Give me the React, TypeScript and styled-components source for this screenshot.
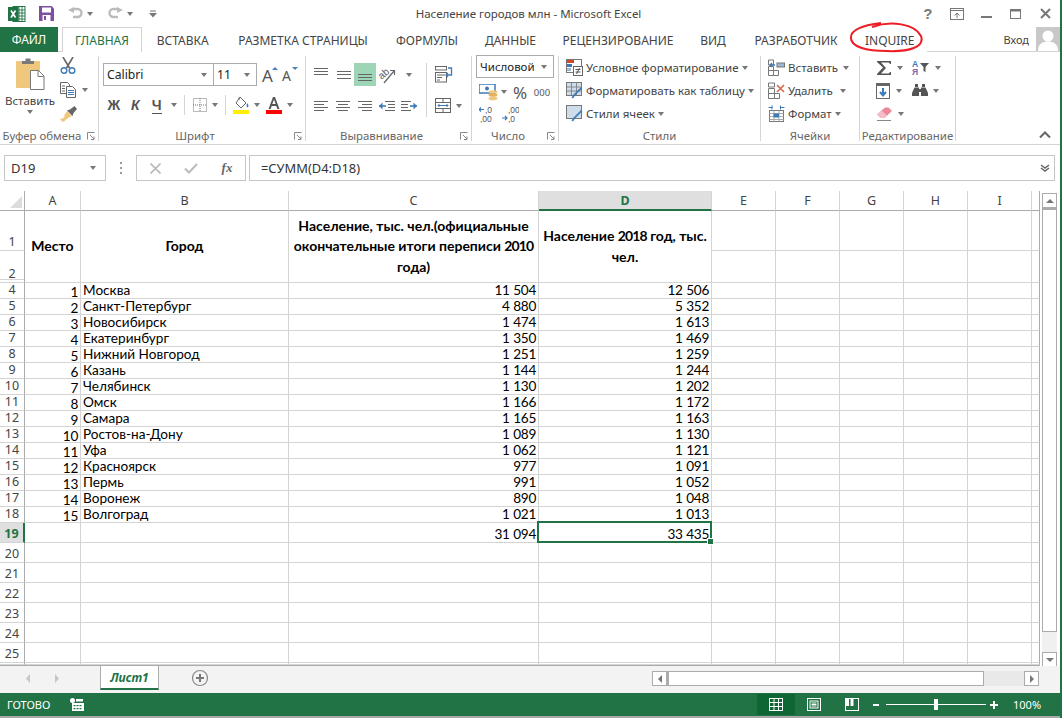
import styled, { createGlobalStyle } from "styled-components";
import { Fragment, type ReactNode } from "react";

const UI = `"Noto Sans", "Open Sans", sans-serif`;
const SHEET = `Lato, "Open Sans", sans-serif`;
const GREEN = "#217346";
const LINE = "#d4d4d4";

const Global = createGlobalStyle`
  html, body { margin: 0; padding: 0; background: #fff; }
  #root { width: 1062px; height: 718px; overflow: hidden; }
`;

const Window = styled.div`
  width: 1062px;
  height: 718px;
  box-sizing: border-box;
  border-right: 2px solid ${GREEN};
  display: flex;
  flex-direction: column;
  font-family: ${UI};
  font-size: 12px;
  color: #444;
  background: #fff;
  overflow: hidden;
`;

/* title bar */
const TitleBar = styled.div`
  height: 27px;
  flex: none;
  display: grid;
  grid-template-columns: 1fr auto 1fr;
  align-items: center;
`;
const Qat = styled.div`
  display: flex;
  align-items: center;
  padding-left: 8px;
`;
const QatSlot = styled.div<{ $w: number }>`
  width: ${(p) => p.$w}px;
  display: flex;
  align-items: center;
`;
const Title = styled.div`
  font-size: 11.5px;
  color: #444;
  padding-right: 3px;
`;
const Controls = styled.div`
  justify-self: end;
  display: flex;
`;
const Control = styled.div`
  width: 29.4px;
  height: 27px;
  display: flex;
  align-items: center;
  justify-content: center;
  font: bold 15px "Liberation Sans", sans-serif;
  color: #777;
`;

/* tabs */
const TabBar = styled.div`
  position: relative;
  height: 25px;
  flex: none;
  box-sizing: border-box;
  border-bottom: 1px solid ${LINE};
  display: flex;
`;
const FileTab = styled.div`
  width: 58px;
  height: 25px;
  margin-right: 4px;
  background: ${GREEN};
  color: #fff;
  display: flex;
  align-items: center;
  justify-content: center;
`;
const Tab = styled.div<{ $w: number; $active?: boolean }>`
  width: ${(p) => p.$w}px;
  height: 25px;
  box-sizing: border-box;
  display: flex;
  align-items: center;
  justify-content: center;
  white-space: nowrap;
  color: ${(p) => (p.$active ? GREEN : "#444")};
  background: #fff;
  border: 1px solid ${(p) => (p.$active ? LINE : "transparent")};
  border-bottom: ${(p) => (p.$active ? "none" : "0")};
`;
const UserArea = styled.div`
  margin-left: auto;
  display: flex;
  align-items: center;
  gap: 7px;
  height: 24px;
  font-size: 11px;
`;
const Avatar = styled.div`
  width: 24px;
  height: 24px;
  background: #c8c8c8;
  display: flex;
  overflow: hidden;
`;
const Circled = styled.svg`
  position: absolute;
  left: 849px;
  top: -6px;
  width: 76px;
  height: 34px;
  pointer-events: none;
`;

/* ribbon */
const Ribbon = styled.div`
  height: 93px;
  flex: none;
  box-sizing: border-box;
  border-bottom: 1px solid ${LINE};
  padding-top: 4px;
  display: flex;
  font-size: 11.5px;
`;
const Group = styled.div<{ $w: number }>`
  width: ${(p) => p.$w}px;
  height: 85px;
  flex: none;
  box-sizing: border-box;
  border-right: 1px solid ${LINE};
  display: flex;
  flex-direction: column;
`;
const GroupBody = styled.div`
  height: 72px;
  display: flex;
  flex: none;
`;
const GroupFoot = styled.div`
  height: 13px;
  padding-top: 1px;
  display: flex;
  align-items: center;
  color: #666;
  font-size: 11.4px;
`;
const FootLabel = styled.div`
  flex: 1;
  text-align: center;
  white-space: nowrap;
`;
const Launcher = styled.svg`
  width: 14px;
  height: 10px;
  flex: none;
`;
const Caret = styled.span<{ $ml?: number }>`
  display: inline-block;
  flex: none;
  width: 0;
  height: 0;
  margin-left: ${(p) => p.$ml ?? 0}px;
  border-left: 3.5px solid transparent;
  border-right: 3.5px solid transparent;
  border-top: 4px solid #777;
`;
const Spacer = styled.span<{ $w: number }>`
  flex: none;
  width: ${(p) => p.$w}px;
`;
const PasteCol = styled.div`
  width: 58px;
  display: flex;
  flex-direction: column;
  align-items: center;
  padding-left: 2px;
  box-sizing: border-box;
`;
const PasteLabel = styled.div`
  margin-top: 2px;
  line-height: 18px;
  color: #444;
`;
const ClipTools = styled.div`
  display: flex;
  flex-direction: column;
  padding-left: 2px;
  gap: 5px;
`;
const ClipRow = styled.div`
  display: flex;
  align-items: center;
  height: 19px;
`;
const FontBody = styled.div`
  display: flex;
  flex-direction: column;
  padding: 7px 0 0 4px;
  gap: 9px;
`;
const FontRow = styled.div`
  display: flex;
  align-items: center;
`;
const FontSelect = styled.div<{ $w: number }>`
  width: ${(p) => p.$w}px;
  height: 23px;
  box-sizing: border-box;
  border: 1px solid #ababab;
  margin-right: -1px;
  padding: 0 6px 0 3px;
  display: flex;
  align-items: center;
  justify-content: space-between;
  background: #fff;
  font-size: 12.2px;
  color: #222;
`;
const SizeButton = styled.div<{ $up?: boolean }>`
  width: 18px;
  margin-left: ${(p) => (p.$up ? 6 : 2)}px;
  height: 22px;
  position: relative;
  display: flex;
  align-items: flex-end;
  justify-content: flex-start;
  font: ${(p) => (p.$up ? 17 : 14)}px ${UI};
  line-height: 20px;
  color: #555;
`;
const SizeMark = styled.span<{ $down?: boolean }>`
  position: absolute;
  top: 3px;
  right: 2px;
  width: 0;
  height: 0;
  border-left: 3px solid transparent;
  border-right: 3px solid transparent;
  ${(p) =>
    p.$down
      ? "border-top: 3px solid #4a7ebb;"
      : "border-bottom: 3px solid #4a7ebb;"}
`;
const FormatKey = styled.div<{ $italic?: boolean; $under?: boolean }>`
  width: 21.5px;
  text-align: center;
  font: bold 14px "Liberation Sans", sans-serif;
  font-style: ${(p) => (p.$italic ? "italic" : "normal")};
  color: #555;
  span {
    border-bottom: ${(p) => (p.$under ? "1.5px solid #555" : "none")};
  }
`;
const VSep = styled.div<{ $ml: number; $mr: number }>`
  width: 1px;
  height: 20px;
  margin: 0 ${(p) => p.$mr}px 0 ${(p) => p.$ml}px;
  background: ${LINE};
  flex: none;
`;
const AlignBody = styled.div`
  display: grid;
  grid-template-columns: repeat(5, 22px) 11px 1fr;
  grid-template-rows: 23px 23px;
  row-gap: 8px;
  padding: 7px 0 0 4px;
`;
const AlignCell = styled.div<{ $on?: boolean; $start?: boolean }>`
  display: flex;
  align-items: center;
  justify-content: ${(p) => (p.$start ? "flex-start" : "center")};
  padding-left: ${(p) => (p.$start ? 4 : 0)}px;
  background: ${(p) => (p.$on ? "#9fd5b7" : "transparent")};
`;
const AlignDivider = styled.div`
  grid-column: 6;
  grid-row: 1 / span 2;
  width: 1px;
  height: 54px;
  background: ${LINE};
  margin-left: 6px;
`;
const NumberBody = styled.div`
  display: flex;
  flex-direction: column;
  padding-left: 4px;
  margin-top: -1px;
`;
const NumberSelect = styled(FontSelect)`
  margin: 0 0 3px;
  font-size: 11.5px;
`;
const NumberRow = styled.div`
  height: 22px;
  display: flex;
  align-items: center;
`;
const PercentKey = styled.div<{ $w: number; $size: number }>`
  width: ${(p) => p.$w}px;
  text-align: center;
  font-size: ${(p) => p.$size}px;
  color: #555;
`;
const Stack = styled.div<{ $pl: number }>`
  display: flex;
  flex-direction: column;
  padding-left: ${(p) => p.$pl}px;
`;
const StackRow = styled.div`
  height: 23px;
  display: flex;
  align-items: center;
  white-space: nowrap;
  gap: 3px;
`;
const StackText = styled.span<{ $w?: number }>`
  min-width: ${(p) => p.$w ?? 0}px;
`;
const EditGrid = styled.div`
  display: grid;
  grid-template-columns: 36px 36px;
  grid-auto-rows: 23px;
  padding-left: 16px;
`;
const EditCell = styled.div`
  display: flex;
  align-items: center;
  gap: 5px;
`;
const CollapseArea = styled.div`
  flex: 1;
  display: flex;
  align-items: flex-end;
  justify-content: flex-end;
  padding: 0 9px 5px 0;
`;

/* formula bar */
const FormulaRow = styled.div`
  height: 26px;
  flex: none;
  margin: 10px 0;
  padding-left: 4px;
  display: flex;
  align-items: stretch;
`;
const NameBox = styled.div`
  width: 102px;
  box-sizing: border-box;
  border: 1px solid #c6c6c6;
  display: flex;
  align-items: center;
  justify-content: space-between;
  padding: 0 9px 0 6px;
  font-size: 13px;
  color: #333;
`;
const Dots = styled.div`
  width: 30px;
  display: flex;
  flex-direction: column;
  align-items: center;
  justify-content: center;
  gap: 3px;
  i {
    width: 2px;
    height: 2px;
    background: #999;
  }
`;
const FxBox = styled.div`
  width: 110px;
  box-sizing: border-box;
  border: 1px solid #c6c6c6;
  margin-right: 3px;
  display: grid;
  grid-template-columns: 1fr 1fr 1fr;
  align-items: center;
  justify-items: center;
`;
const FxMark = styled.span`
  font: italic bold 13px "Liberation Serif", serif;
  color: #666;
`;
const FormulaInput = styled.div`
  width: 806px;
  box-sizing: border-box;
  border: 1px solid #c6c6c6;
  display: flex;
  align-items: center;
  justify-content: space-between;
  padding: 0 4px 0 11px;
  font-size: 12.9px;
  color: #333;
`;

/* sheet */
const SheetArea = styled.div`
  height: 475px;
  flex: none;
  display: flex;
`;
const Sheet = styled.div`
  width: 1040px;
  box-sizing: border-box;
  height: 475px;
  border-bottom: 1px solid #ababab;
  display: grid;
  grid-template-columns: 25px 56px 208px 250px 173px 64px 64px 64px 64px 64px 8px;
  grid-template-rows: 20px 40px 32px repeat(15, 16px) repeat(7, 20px) 2px;
  overflow: hidden;
`;
const Corner = styled.div`
  box-sizing: border-box;
  border-right: 1px solid #ababab;
  border-bottom: 1px solid #ababab;
  display: flex;
  align-items: flex-end;
  justify-content: flex-end;
  padding: 0 2px 2px 0;
`;
const ColHead = styled.div<{ $on?: boolean; $last?: boolean }>`
  box-sizing: border-box;
  display: flex;
  align-items: center;
  justify-content: center;
  font-size: 12.5px;
  font-weight: ${(p) => (p.$on ? 700 : 400)};
  color: ${(p) => (p.$on ? GREEN : "#444")};
  background: ${(p) => (p.$on ? "#dfdfdf" : "#fff")};
  border-right: 1px solid ${(p) => (p.$last ? "#ababab" : LINE)};
  border-bottom: ${(p) => (p.$on ? `2px solid ${GREEN}` : "1px solid #ababab")};
`;
const RowHead = styled.div<{ $on?: boolean; $hidden?: boolean }>`
  box-sizing: border-box;
  display: flex;
  align-items: flex-end;
  justify-content: center;
  line-height: 16px;
  font-size: 12.5px;
  font-weight: ${(p) => (p.$on ? 700 : 400)};
  color: ${(p) => (p.$on ? GREEN : "#444")};
  background: ${(p) => (p.$on ? "#dfdfdf" : "#fff")};
  border-right: ${(p) => (p.$on ? `2px solid ${GREEN}` : "1px solid #ababab")};
  border-bottom: 1px solid ${LINE};
  box-shadow: ${(p) =>
    p.$hidden ? `inset 0 -2px 0 #fff, inset 0 -3px 0 ${LINE}` : "none"};
`;
const Cell = styled.div<{
  $num?: boolean;
  $span?: number;
  $raised?: boolean;
  $last?: boolean;
  $sel?: boolean;
}>`
  position: relative;
  box-sizing: border-box;
  min-width: 0;
  grid-row: span ${(p) => p.$span ?? 1};
  display: flex;
  align-items: flex-end;
  justify-content: ${(p) => (p.$num ? "flex-end" : "flex-start")};
  padding: 0 2px ${(p) => (p.$raised ? 2 : 0)}px 2px;
  border-right: 1px solid ${(p) => (p.$last ? "#ababab" : LINE)};
  border-bottom: 1px solid ${LINE};
  font: 13.6px/12px ${SHEET};
  letter-spacing: ${(p) => (p.$num ? "-0.3px" : "0")};
  word-spacing: ${(p) => (p.$num ? "0.5px" : "0")};
  color: #000;
  white-space: nowrap;
  ${(p) =>
    p.$sel
      ? `&::after {
          content: "";
          position: absolute;
          inset: -2px -1px -1px -2px;
          border: 2px solid ${GREEN};
        }`
      : ""}
`;
const HeadCell = styled(Cell)`
  align-items: center;
  justify-content: center;
  text-align: center;
  font-size: 14px;
  font-weight: 700;
  line-height: 20.5px;
`;
const Digits = styled.span`
  letter-spacing: -0.9px;
`;
const Handle = styled.span`
  position: absolute;
  right: -3px;
  bottom: -3px;
  width: 5px;
  height: 5px;
  background: ${GREEN};
  border: 1px solid #fff;
  z-index: 1;
`;
const VScroll = styled.div`
  width: 20px;
  box-sizing: border-box;
  padding: 2px 3px 0 2px;
  display: flex;
  flex-direction: column;
`;
const ScrollBtn = styled.div<{ $flip?: boolean }>`
  height: 15px;
  flex: none;
  box-sizing: border-box;
  border: 1px solid #ababab;
  display: flex;
  align-items: center;
  justify-content: center;
  &::before {
    content: "";
    width: 0;
    height: 0;
    border-left: 4px solid transparent;
    border-right: 4px solid transparent;
    ${(p) =>
      p.$flip
        ? "border-top: 4px solid #777;"
        : "border-bottom: 4px solid #777;"}
  }
`;
const VTrack = styled.div`
  flex: none;
  height: 444px;
  background: #f0f0f0;
`;
const VThumb = styled.div`
  height: 424px;
  box-sizing: border-box;
  background: #fff;
  border: 1px solid #ababab;
  border-top-width: 2px;
`;

/* tab strip */
const SheetBar = styled.div`
  height: 27px;
  flex: none;
  background: #f3f3f3;
  display: flex;
  align-items: flex-start;
`;
const NavArrows = styled.div`
  width: 100px;
  height: 24px;
  box-sizing: border-box;
  padding-left: 25px;
  display: flex;
  gap: 23px;
  align-items: center;
`;
const SheetTab = styled.div`
  width: 59px;
  height: 25px;
  margin-top: -1px;
  box-sizing: border-box;
  background: #fff;
  border: 1px solid #ababab;
  border-bottom: 2px solid ${GREEN};
  display: flex;
  align-items: center;
  justify-content: center;
  font: italic 700 12px ${UI};
  color: ${GREEN};
`;
const AddSheet = styled.svg`
  width: 18px;
  height: 18px;
  margin: 3px 0 0 32px;
`;
const HScroll = styled.div`
  margin-left: auto;
  margin-right: 21px;
  margin-top: 5px;
  width: 387px;
  height: 15px;
  display: flex;
  background: #e9e9e9;
`;
const HBtn = styled.div<{ $right?: boolean }>`
  width: 15px;
  flex: none;
  box-sizing: border-box;
  border: 1px solid #ababab;
  background: #fff;
  display: flex;
  align-items: center;
  justify-content: center;
  margin-left: ${(p) => (p.$right ? "auto" : 0)};
  &::before {
    content: "";
    width: 0;
    height: 0;
    border-top: 4px solid transparent;
    border-bottom: 4px solid transparent;
    ${(p) =>
      p.$right
        ? "border-left: 4px solid #777;"
        : "border-right: 4px solid #777;"}
  }
`;
const HThumb = styled.div`
  width: 317px;
  box-sizing: border-box;
  background: #fff;
  border: 1px solid #ababab;
  border-left-width: 2px;
`;

/* status bar */
const StatusBar = styled.div`
  height: 23px;
  flex: none;
  background: ${GREEN};
  color: #fff;
  display: flex;
  align-items: center;
  padding-left: 7px;
  font-size: 11px;
`;
const StatusText = styled.span`
  width: 63px;
`;
const StatusTools = styled.div`
  margin-left: auto;
  display: flex;
  align-items: center;
  height: 23px;
`;
const ViewBtn = styled.div<{ $on?: boolean }>`
  width: 38px;
  height: 21px;
  display: flex;
  align-items: center;
  justify-content: center;
  background: ${(p) => (p.$on ? "#0f6635" : "transparent")};
`;
const ZoomSign = styled.svg`
  width: 12px;
  height: 12px;
  flex: none;
`;
const Slider = styled.div`
  width: 100px;
  height: 1px;
  margin: 0 2px;
  background: #fff;
  display: flex;
  justify-content: center;
  align-items: center;
  i {
    width: 4px;
    height: 11px;
    background: #fff;
  }
`;
const ZoomValue = styled.div`
  width: 60px;
  padding-left: 13px;
  box-sizing: border-box;
`;
const Shade = styled.div`
  height: 2px;
  flex: none;
  background: #a8a8a8;
`;

/* drawn icons */
const BL = "#3f7ab8";

const ExcelLogo = () => (
  <svg width="18" height="18" viewBox="0 0 18 18">
    <rect x="5" y="1.5" width="12" height="15" fill="#fff" stroke={GREEN} />
    <path d="M11 2v14M14 2v14M6 5h11M6 8h11M6 11h11M6 14h11" stroke={GREEN} strokeWidth=".9" />
    <rect x="0" y="2" width="10.5" height="14" fill={GREEN} />
    <path d="M3 5.5l4.5 7M7.5 5.5l-4.5 7" stroke="#fff" strokeWidth="1.7" />
  </svg>
);
const SaveIcon = () => (
  <svg width="15" height="15" viewBox="0 0 15 15">
    <path d="M0 0h12.5L15 2.5V15H0z" fill="#7d4f9f" />
    <rect x="3" y="1.5" width="9" height="5" fill="#fff" />
    <rect x="3.5" y="9" width="8" height="6" fill="#fff" />
    <rect x="5" y="10" width="2" height="4" fill="#7d4f9f" />
  </svg>
);
const UndoGlyph = styled.svg<{ $flip?: boolean }>`
  transform: ${(p) => (p.$flip ? "scaleX(-1)" : "none")};
`;
const UndoIcon = ({ flip }: { flip?: boolean }) => (
  <UndoGlyph width="15" height="13" viewBox="0 0 15 13" $flip={flip}>
    <path d="M5 2H9.5a4 4 0 0 1 0 8H5" fill="none" stroke="#bbb" strokeWidth="2.4" />
    <path d="M6 0v6L0 3z" fill="#bbb" />
  </UndoGlyph>
);
const Customize = () => (
  <svg width="8" height="8" viewBox="0 0 8 8">
    <path d="M1 1h6" stroke="#777" />
    <path d="M0 3h8L4 7.5z" fill="#777" />
  </svg>
);
const RibbonMode = () => (
  <svg width="14" height="12" viewBox="0 0 14 12" fill="none" stroke="#777">
    <rect x=".5" y=".5" width="13" height="11" />
    <path d="M1 2.5h12" />
    <path d="M7 10V5M4.5 7.5L7 5l2.5 2.5" />
  </svg>
);
const MinIcon = () => (
  <svg width="14" height="12" viewBox="0 0 14 12">
    <rect x="1" y="8" width="11" height="2" fill="#777" />
  </svg>
);
const MaxIcon = () => (
  <svg width="11" height="10" viewBox="0 0 11 10" fill="none" stroke="#777">
    <rect x=".5" y=".5" width="10" height="9" />
    <path d="M0 1.5h11" strokeWidth="2" />
  </svg>
);
const CloseIcon = () => (
  <svg width="11" height="11" viewBox="0 0 11 11">
    <path d="M1 1l9 9M10 1l-9 9" stroke="#777" strokeWidth="2" />
  </svg>
);
const AvatarGlyph = () => (
  <svg width="24" height="24" viewBox="0 0 24 24">
    <circle cx="12" cy="9" r="5.5" fill="#fff" />
    <path d="M2 24c0-7 4-9.5 10-9.5S22 17 22 24z" fill="#fff" />
  </svg>
);
const PasteIcon = () => (
  <svg width="29" height="34" viewBox="0 0 29 34">
    <rect x="0" y="5" width="24" height="27" rx="1" fill="#efc77d" />
    <path d="M6 8V5h3.5V2.5h5V5H18v3z" fill="#7a7a7a" />
    <path d="M14.5 14.5h8l5.5 5.5v13.5h-13.5z" fill="#fff" stroke="#777" />
    <path d="M22 15v5.5h5.5" fill="none" stroke="#777" />
  </svg>
);
const Scissors = () => (
  <svg width="16" height="18" viewBox="0 0 16 18" fill="none">
    <path d="M3 0l6.5 11M13 0L6.5 11" stroke="#666" strokeWidth="1.6" />
    <circle cx="4" cy="13.5" r="2.8" stroke={BL} strokeWidth="1.4" />
    <circle cx="12" cy="13.5" r="2.8" stroke={BL} strokeWidth="1.4" />
  </svg>
);
const CopyIcon = () => (
  <svg width="16" height="16" viewBox="0 0 16 16" fill="#fff" stroke="#666">
    <path d="M.5.5h7l2 2v9h-9z" />
    <path d="M6.5 4.5h6l3 3v8h-9z" />
    <path d="M2 4h3M2 6.5h3M2 9h3" />
    <path d="M8 8.5h6M8 10.5h6M8 12.5h6" stroke={BL} />
  </svg>
);
const BrushIcon = () => (
  <svg width="17" height="16" viewBox="0 0 17 16">
    <path d="M7 5l5 5-4 2-4 3.5H2L0 13l2.5-.5L5.5 10l-2 .5z" fill="#efc77d" />
    <path d="M7 4.5l5.5 5.5 1-3L17 3l-2.5-3L10 3.500z" fill="#666" />
  </svg>
);
const LaunchGlyph = () => (
  <g fill="none" stroke="#888">
    <path d="M2.5 8.5v-7h7" />
    <path d="M5 4l4 4M9 5.5V8.5H6" />
  </g>
);
const BordersIcon = () => (
  <svg width="14" height="14" viewBox="0 0 14 14" fill="none" stroke="#777" strokeDasharray="1 1">
    <rect x=".5" y=".5" width="13" height="13" />
    <path d="M7 0v14M0 7h14" />
  </svg>
);
const FillIcon = () => (
  <svg width="17" height="18" viewBox="0 0 17 18">
    <path d="M7 1l6 6-5 5-5-5z" fill="#fff" stroke="#666" />
    <path d="M6 4V1.5" stroke="#666" />
    <path d="M14 7c1.5 2 2 3 1 4s-2 0-1-4z" fill={BL} />
    <rect x="0" y="14" width="16" height="4" fill="#ffef00" />
  </svg>
);
const FontColorIcon = () => (
  <svg width="16" height="18" viewBox="0 0 16 18">
    <path d="M2.5 13L7 1h2l4.5 12h-2.2l-1-3H5.700l-1 3zM6.300 8h3.400L8 3.500z" fill="#555" fillRule="evenodd" />
    <rect x="0" y="14" width="16" height="4" fill="#f00" />
  </svg>
);
const Lines = ({ d }: { d: string }) => (
  <svg width="16" height="18" viewBox="0 0 16 18">
    <path d={d} stroke="#666" strokeWidth="1" fill="none" />
  </svg>
);
const OrientSvg = styled.svg`
  overflow: visible;
`;
const OrientIcon = () => (
  <OrientSvg width="18" height="18" viewBox="0 0 18 18">
    <text x="1" y="11" transform="rotate(-40 6 9)" fontSize="10" fontFamily="Liberation Sans" fill="#555">ab</text>
    <path d="M6 17L16 5M12 4.500H16.500V9" stroke="#666" fill="none" strokeWidth="1.2" />
  </OrientSvg>
);
const WrapIcon = () => (
  <svg width="18" height="17" viewBox="0 0 18 17" fill="none" stroke="#666">
    <rect x=".5" y=".5" width="11" height="3.5" />
    <rect x=".5" y="6.5" width="11" height="9.5" />
    <path d="M2 9h8M2 11.5h5M2 14h3" />
    <path d="M13 2h3.500v7H11M13 7l-2 2 2 2" stroke={BL} strokeWidth="1.3" />
  </svg>
);
const IndentIcon = ({ flip }: { flip?: boolean }) => (
  <UndoGlyph width="16" height="12" viewBox="0 0 16 12" $flip={flip}>
    <path d="M6 1.5h10M9 4.5h7M9 7.5h7M6 10.5h10" stroke="#666" fill="none" />
    <path d="M0 6h7" stroke={BL} strokeWidth="1.6" />
    <path d="M0 6l3.5-3.5v7z" fill={BL} />
  </UndoGlyph>
);
const MergeIcon = () => (
  <svg width="16" height="15" viewBox="0 0 16 15" fill="none" stroke="#666">
    <rect x=".5" y=".5" width="15" height="14" />
    <path d="M.5 4.5h15M.5 10.5h15M8 .5v4M8 10.5v4" />
    <path d="M3 7.5h10M4.5 6L3 7.5 4.5 9M11.5 6L13 7.5 11.5 9" stroke={BL} />
  </svg>
);
const CurrencyIcon = () => (
  <svg width="19" height="17" viewBox="0 0 19 17">
    <rect x="0" y="0" width="16" height="9" fill="#fff" stroke={BL} strokeWidth="1.5" />
    <circle cx="8" cy="4.5" r="2" fill={BL} />
    <ellipse cx="14" cy="8" rx="4.5" ry="1.8" fill="#efc77d" />
    <ellipse cx="14" cy="11" rx="4.5" ry="1.8" fill="#e5b35f" />
    <ellipse cx="14" cy="14.5" rx="4.5" ry="1.8" fill="#efc77d" />
  </svg>
);
const DecimalIcon = ({ more }: { more?: boolean }) => (
  <svg width="17" height="17" viewBox="0 0 17 17">
    <text x={6} y="7" fontSize="8.5" fontFamily="Liberation Sans" fill="#555">{more ? ",00" : ",0"}</text>
    <text x={more ? 6 : 1} y="16" fontSize="8.5" fontFamily="Liberation Sans" fill="#555">{more ? ",0" : ",00"}</text>
    <path d={more ? "M0 12h5M3 10l2 2-2 2" : "M0 3.5h5M2 1.5l-2 2 2 2"} stroke={BL} fill="none" strokeWidth="1.2" />
  </svg>
);
const TableBase = ({ children }: { children?: ReactNode }) => (
  <svg width="17" height="17" viewBox="0 0 17 17">
    {children}
  </svg>
);
const CondIcon = () => (
  <TableBase>
    <rect x=".5" y=".5" width="15" height="13" fill="#fff" stroke="#777" />
    <rect x="1" y="1" width="7" height="3" fill="#d24726" />
    <rect x="1" y="5" width="5" height="3" fill={BL} />
    <rect x="1" y="9" width="4" height="3" fill="#9db7d6" />
    <rect x="7.5" y="7.5" width="9" height="9" fill="#fff" stroke="#666" />
    <path d="M9.5 10.5h5M9.5 13h5M13.5 9l-3 6" stroke="#555" />
  </TableBase>
);
const TableFmt = () => (
  <TableBase>
    <rect x=".5" y=".5" width="15" height="13" fill="#cfdcea" stroke="#777" />
    <path d="M5.5 1v12M10.5 1v12M1 5h14M1 9h14" stroke="#888" />
    <path d="M16.5 6L9 13.5l-2 3-1.5-1 2-3L15 5z" fill={BL} />
  </TableBase>
);
const CellStyle = () => (
  <TableBase>
    <rect x=".5" y=".5" width="15" height="13" fill="#cfdcea" stroke="#777" />
    <path d="M16.5 6L9 13.5l-2 3-1.5-1 2-3L15 5z" fill={BL} />
  </TableBase>
);
const InsertIcon = () => (
  <TableBase>
    <path d="M.5 7.5h5v4h-5zM5.5 11.5h5v5h-5zM.5 11.5h5v5h-5zM.5 1h5v5h-5z" fill="#fff" stroke="#777" />
    <rect x="9" y="4" width="7.5" height="4" fill="#9db7d6" stroke="#777" />
    <path d="M2 6h5M5 4L7 6 5 8" stroke={BL} strokeWidth="1.3" fill="none" transform="rotate(180 4.5 6)" />
  </TableBase>
);
const DeleteIcon = () => (
  <TableBase>
    <path d="M.5 1h6v4h-6zM.5 6.5h6v5h-6zM.5 11.5h6v5h-6zM6.5 11.5h5v5h-5z" fill="#fff" stroke="#777" />
    <path d="M9 3l7 7M16 3l-7 7" stroke="#d9694e" strokeWidth="1.6" />
  </TableBase>
);
const FormatIcon = () => (
  <TableBase>
    <path d="M.5 2.5h4M12 2.5h4.500M4 .5v4M12.5 .5v4" stroke={BL} fill="none" />
    <rect x="1.5" y="5.5" width="14" height="11" fill="#fff" stroke="#777" />
    <path d="M1.5 8.5h14M1.5 11.5h14M1.5 14.5h14M6 5.5v11M11 5.5v11" stroke="#aaa" />
    <rect x="5.5" y="8.5" width="5.5" height="4" fill={BL} />
  </TableBase>
);
const SigmaIcon = () => (
  <svg width="16" height="16" viewBox="0 0 16 16">
    <path d="M1 1h14v3h-1l-1-1.5H5L10 8l-5 5.5h8l1-1.5h1v3H1v-1l6-6.5L1 2z" fill="#555" />
  </svg>
);
const SortIcon = () => (
  <svg width="18" height="17" viewBox="0 0 18 17">
    <text x="0" y="7.5" fontSize="8.5" fontWeight="700" fontFamily="Liberation Sans" fill="#3f7ab8">A</text>
    <text x="0" y="16" fontSize="8.5" fontWeight="700" fontFamily="Liberation Sans" fill="#8064a2">Я</text>
    <path d="M8 4h9l-3.500 4v5l-2-1V8z" fill="#555" />
  </svg>
);
const FillDown = () => (
  <svg width="15" height="16" viewBox="0 0 15 16">
    <rect x=".5" y="1" width="13" height="14.5" fill="#fff" stroke="#666" />
    <rect x="0" y="0" width="14" height="3" fill="#666" />
    <path d="M7 5v7M4 9l3 3.5L10 9" stroke={BL} strokeWidth="2" fill="none" />
  </svg>
);
const Binoculars = () => (
  <svg width="16" height="14" viewBox="0 0 16 14" fill="#555">
    <path d="M3 0h3v3H3zM10 0h3v3h-3z" />
    <path d="M2.5 3.5h4.5v8.500H0v-3zM9 3.5h4.500L16 9v3H9z" />
    <path d="M7 5h2v3H7z" />
  </svg>
);
const Eraser = () => (
  <svg width="17" height="14" viewBox="0 0 17 14">
    <path d="M9 .5h3.500L16 4 8.500 11H4.500L1 7.500z" fill="#e9899a" />
    <path d="M1 7.500L4.500 11h4L11 8.500 5.500 3.500z" fill="#f4bdc7" />
    <path d="M1 13.500h14" stroke="#888" />
  </svg>
);
const XMark = () => (
  <svg width="11" height="11" viewBox="0 0 11 11">
    <path d="M.5.5l10 10M10.5.5l-10 10" stroke="#bbb" strokeWidth="1.7" />
  </svg>
);
const CheckMark = () => (
  <svg width="14" height="11" viewBox="0 0 14 11">
    <path d="M1 5.500l4 4L13 1" stroke="#bbb" strokeWidth="2" fill="none" />
  </svg>
);
const FormulaChevron = () => (
  <svg width="10" height="8" viewBox="0 0 10 8">
    <path d="M1 1l4 3 4-3M1 4l4 3 4-3" stroke="#666" strokeWidth="1.5" fill="none" />
  </svg>
);
const NavArrow = ({ right }: { right?: boolean }) => (
  <svg width="6" height="9" viewBox="0 0 6 9">
    <path d={right ? "M1 0l4 4.500L1 9z" : "M5 0L1 4.500 5 9z"} fill="#c6c6c6" />
  </svg>
);
const MacroIcon = () => (
  <svg width="14" height="13" viewBox="0 0 14 13" fill="#fff">
    <circle cx="2.5" cy="2.5" r="2.5" />
    <rect x="6" y="1" width="7" height="2.5" />
    <path d="M2 5h12v8H2zM3.500 7v1.200h2V7zm3 0v1.200h2V7zm3 0v1.200h2V7zm-6 3v1.200h2V10zm3 0v1.200h2V10zm3 0v1.200h2V10z" fillRule="evenodd" />
  </svg>
);
const NormalView = () => (
  <svg width="14" height="13" viewBox="0 0 14 13" fill="none" stroke="#fff">
    <rect x=".5" y=".5" width="13" height="12" />
    <path d="M5 .5v12M9.5 .5v12M.5 4.5h13M.5 8.5h13" />
  </svg>
);
const LayoutView = () => (
  <svg width="14" height="13" viewBox="0 0 14 13" fill="none" stroke="#fff">
    <rect x=".5" y=".5" width="13" height="12" />
    <rect x="3" y="3" width="8" height="7" />
    <path d="M4.5 5h5M4.5 6.5h5M4.5 8h5" />
  </svg>
);
const BreakView = () => (
  <svg width="14" height="13" viewBox="0 0 14 13">
    <rect x=".5" y=".5" width="13" height="12" fill="none" stroke="#fff" />
    <rect x="1" y="1" width="3" height="7" fill="#fff" />
    <rect x="5.5" y="1" width="3" height="7" fill="#fff" />
  </svg>
);

const alignTop = "M1 2.5h14M1 5.5h14M1 8.5h14";
const alignMid = "M2 5.5h14M2 8.5h14M2 12.5h14";
const alignBot = "M1 8.5h14M1 11.5h14M1 14.5h14";
const paraLeft = "M1 4.5h14M1 7.5h10M1 10.5h14M1 13.5h10";
const paraCenter = "M1 4.5h14M3 7.5h10M1 10.5h14M3 13.5h10";
const paraRight = "M1 4.5h14M5 7.5h10M1 10.5h14M5 13.5h10";

const tabs: [string, number][] = [
  ["ВСТАВКА", 81.5],
  ["РАЗМЕТКА СТРАНИЦЫ", 159],
  ["ФОРМУЛЫ", 89],
  ["ДАННЫЕ", 78],
  ["РЕЦЕНЗИРОВАНИЕ", 137],
  ["ВИД", 53],
  ["РАЗРАБОТЧИК", 113],
  ["INQUIRE", 74.5],
];

const columns = ["A", "B", "C", "D", "E", "F", "G", "H", "I"];

const rows: [number, string, string, string][] = [
  [1, "Москва", "11 504", "12 506"],
  [2, "Санкт-Петербург", "4 880", "5 352"],
  [3, "Новосибирск", "1 474", "1 613"],
  [4, "Екатеринбург", "1 350", "1 469"],
  [5, "Нижний Новгород", "1 251", "1 259"],
  [6, "Казань", "1 144", "1 244"],
  [7, "Челябинск", "1 130", "1 202"],
  [8, "Омск", "1 166", "1 172"],
  [9, "Самара", "1 165", "1 163"],
  [10, "Ростов-на-Дону", "1 089", "1 130"],
  [11, "Уфа", "1 062", "1 121"],
  [12, "Красноярск", "977", "1 091"],
  [13, "Пермь", "991", "1 052"],
  [14, "Воронеж", "890", "1 048"],
  [15, "Волгоград", "1 021", "1 013"],
];

const EmptyTail = () => (
  <>
    {["E", "F", "G", "H", "I", "J"].map((c) => (
      <Cell key={c} $last={c === "J"} />
    ))}
  </>
);

function App() {
  return (
    <Window>
      <Global />
      <TitleBar>
        <Qat>
          <QatSlot $w={31}><ExcelLogo /></QatSlot>
          <QatSlot $w={29}><SaveIcon /></QatSlot>
          <QatSlot $w={40}><UndoIcon /><Caret $ml={4} /></QatSlot>
          <QatSlot $w={41}><UndoIcon flip /><Caret $ml={4} /></QatSlot>
          <QatSlot $w={10}><Customize /></QatSlot>
        </Qat>
        <Title>Население городов млн - Microsoft Excel</Title>
        <Controls>
          <Control>?</Control>
          <Control><RibbonMode /></Control>
          <Control><MinIcon /></Control>
          <Control><MaxIcon /></Control>
          <Control><CloseIcon /></Control>
        </Controls>
      </TitleBar>

      <TabBar>
        <FileTab>ФАЙЛ</FileTab>
        <Tab $w={80} $active>ГЛАВНАЯ</Tab>
        {tabs.map(([name, w]) => (
          <Tab key={name} $w={w}>{name}</Tab>
        ))}
        <UserArea>
          Вход
          <Avatar><AvatarGlyph /></Avatar>
        </UserArea>
        <Circled viewBox="0 0 76 34">
          <path
            d="M23 6C42-1 66 3 72 15 76 26 60 31 38 30 18 30 1 26 2 16 2 9 14 4 32 2"
            fill="none"
            stroke="#ee1c25"
            strokeWidth="2"
          />
        </Circled>
      </TabBar>

      <Ribbon>
        <Group $w={99}>
          <GroupBody>
            <PasteCol>
              <PasteIcon />
              <PasteLabel>Вставить</PasteLabel>
              <Caret />
            </PasteCol>
            <ClipTools>
              <ClipRow><Scissors /></ClipRow>
              <ClipRow><CopyIcon /><Caret $ml={6} /></ClipRow>
              <ClipRow><BrushIcon /></ClipRow>
            </ClipTools>
          </GroupBody>
          <GroupFoot>
            <FootLabel>Буфер обмена</FootLabel>
            <Launcher viewBox="0 0 12 10"><LaunchGlyph /></Launcher>
          </GroupFoot>
        </Group>

        <Group $w={207}>
          <GroupBody>
            <FontBody>
              <FontRow>
                <FontSelect $w={111}>Calibri<Caret /></FontSelect>
                <FontSelect $w={44}>11<Caret /></FontSelect>
                <SizeButton $up>A<SizeMark /></SizeButton>
                <SizeButton>A<SizeMark $down /></SizeButton>
              </FontRow>
              <FontRow>
                <FormatKey>Ж</FormatKey>
                <FormatKey $italic>К</FormatKey>
                <FormatKey $under><span>Ч</span></FormatKey>
                <Caret $ml={3} />
                <VSep $ml={7} $mr={8} />
                <BordersIcon />
                <Caret $ml={5} />
                <VSep $ml={7} $mr={7} />
                <FillIcon />
                <Caret $ml={4} />
                <Spacer $w={6} />
                <FontColorIcon />
                <Caret $ml={5} />
              </FontRow>
            </FontBody>
          </GroupBody>
          <GroupFoot>
            <FootLabel>Шрифт</FootLabel>
            <Launcher viewBox="0 0 12 10"><LaunchGlyph /></Launcher>
          </GroupFoot>
        </Group>

        <Group $w={166}>
          <GroupBody>
            <AlignBody>
              <AlignCell><Lines d={alignTop} /></AlignCell>
              <AlignCell><Lines d={alignMid} /></AlignCell>
              <AlignCell $on><Lines d={alignBot} /></AlignCell>
              <AlignCell><OrientIcon /></AlignCell>
              <AlignCell><Caret /></AlignCell>
              <AlignDivider />
              <AlignCell $start><WrapIcon /></AlignCell>
              <AlignCell><Lines d={paraLeft} /></AlignCell>
              <AlignCell><Lines d={paraCenter} /></AlignCell>
              <AlignCell><Lines d={paraRight} /></AlignCell>
              <AlignCell><IndentIcon /></AlignCell>
              <AlignCell><IndentIcon flip /></AlignCell>
              <AlignCell $start><MergeIcon /><Caret $ml={5} /></AlignCell>
            </AlignBody>
          </GroupBody>
          <GroupFoot>
            <FootLabel>Выравнивание</FootLabel>
            <Launcher viewBox="0 0 12 10"><LaunchGlyph /></Launcher>
          </GroupFoot>
        </Group>

        <Group $w={87}>
          <GroupBody>
            <NumberBody>
              <NumberSelect $w={78}>Числовой<Caret /></NumberSelect>
              <NumberRow>
                <Spacer $w={3} />
                <CurrencyIcon />
                <Caret $ml={3} />
                <PercentKey $w={26} $size={17}>%</PercentKey>
                <PercentKey $w={18} $size={9.5}>000</PercentKey>
              </NumberRow>
              <NumberRow>
                <Spacer $w={3} />
                <DecimalIcon />
                <Spacer $w={6} />
                <DecimalIcon more />
              </NumberRow>
            </NumberBody>
          </GroupBody>
          <GroupFoot>
            <FootLabel>Число</FootLabel>
            <Launcher viewBox="0 0 12 10"><LaunchGlyph /></Launcher>
          </GroupFoot>
        </Group>

        <Group $w={202}>
          <GroupBody>
            <Stack $pl={7}>
              <StackRow><CondIcon /><StackText>Условное форматирование</StackText><Caret /></StackRow>
              <StackRow><TableFmt /><StackText>Форматировать как таблицу</StackText><Caret /></StackRow>
              <StackRow><CellStyle /><StackText>Стили ячеек</StackText><Caret /></StackRow>
            </Stack>
          </GroupBody>
          <GroupFoot><FootLabel>Стили</FootLabel></GroupFoot>
        </Group>

        <Group $w={99}>
          <GroupBody>
            <Stack $pl={7}>
              <StackRow><InsertIcon /><StackText $w={50}>Вставить</StackText><Caret $ml={2} /></StackRow>
              <StackRow><DeleteIcon /><StackText $w={47}>Удалить</StackText><Caret $ml={2} /></StackRow>
              <StackRow><FormatIcon /><StackText>Формат</StackText><Caret /></StackRow>
            </Stack>
          </GroupBody>
          <GroupFoot><FootLabel>Ячейки</FootLabel></GroupFoot>
        </Group>

        <Group $w={96}>
          <GroupBody>
            <EditGrid>
              <EditCell><SigmaIcon /><Caret /></EditCell>
              <EditCell><SortIcon /><Caret /></EditCell>
              <EditCell><FillDown /><Caret /></EditCell>
              <EditCell><Binoculars /><Caret /></EditCell>
              <EditCell><Eraser /><Caret /></EditCell>
            </EditGrid>
          </GroupBody>
          <GroupFoot><FootLabel>Редактирование</FootLabel></GroupFoot>
        </Group>

        <CollapseArea>
          <svg width="12" height="8" viewBox="0 0 12 8">
            <path d="M1 6.5l5-5 5 5" fill="none" stroke="#666" strokeWidth="2" />
          </svg>
        </CollapseArea>
      </Ribbon>

      <FormulaRow>
        <NameBox>D19<Caret /></NameBox>
        <Dots><i /><i /><i /></Dots>
        <FxBox>
          <XMark />
          <CheckMark />
          <FxMark>fx</FxMark>
        </FxBox>
        <FormulaInput>=СУММ(D4:D18)<FormulaChevron /></FormulaInput>
      </FormulaRow>

      <SheetArea>
        <Sheet>
          <Corner>
            <svg width="12" height="12" viewBox="0 0 12 12">
              <path d="M12 0v12H0z" fill="#dcdcdc" />
            </svg>
          </Corner>
          {columns.map((c) => (
            <ColHead key={c} $on={c === "D"}>{c}</ColHead>
          ))}
          <ColHead $last />

          <RowHead>1</RowHead>
          <HeadCell $span={2}>Место</HeadCell>
          <HeadCell $span={2}>Город</HeadCell>
          <HeadCell $span={2}>
            <div>
              Население, тыс. чел.(официальные
              <br />
              окончательные итоги переписи <Digits>2010</Digits>
              <br />
              года)
            </div>
          </HeadCell>
          <HeadCell $span={2}>
            <div>
              Население <Digits>2018</Digits> год, тыс.
              <br />
              чел.
            </div>
          </HeadCell>
          <EmptyTail />
          <RowHead $hidden>2</RowHead>
          <EmptyTail />

          {rows.map(([place, city, census, current], i) => (
            <Fragment key={place}>
              <RowHead>{i + 4}</RowHead>
              <Cell $num>{place}</Cell>
              <Cell $raised>{city}</Cell>
              <Cell $num $raised>{census}</Cell>
              <Cell $num $raised>{current}</Cell>
              <EmptyTail />
            </Fragment>
          ))}

          <RowHead $on>19</RowHead>
          <Cell />
          <Cell />
          <Cell $num $raised>31 094</Cell>
          <Cell $num $raised $sel>33 435<Handle /></Cell>
          <EmptyTail />

          {[20, 21, 22, 23, 24, 25].map((n) => (
            <Fragment key={n}>
              <RowHead>{n}</RowHead>
              <Cell />
              <Cell />
              <Cell />
              <Cell />
              <EmptyTail />
            </Fragment>
          ))}

          <RowHead />
          <Cell />
          <Cell />
          <Cell />
          <Cell />
          <EmptyTail />
        </Sheet>
        <VScroll>
          <ScrollBtn />
          <VTrack><VThumb /></VTrack>
          <ScrollBtn $flip />
        </VScroll>
      </SheetArea>

      <SheetBar>
        <NavArrows>
          <NavArrow />
          <NavArrow right />
        </NavArrows>
        <SheetTab>Лист1</SheetTab>
        <AddSheet viewBox="0 0 18 18">
          <circle cx="9" cy="9" r="7.5" fill="none" stroke="#888" strokeWidth="1.2" />
          <path d="M5 9h8M9 5v8" stroke="#777" strokeWidth="2" />
        </AddSheet>
        <HScroll>
          <HBtn />
          <HThumb />
          <HBtn $right />
        </HScroll>
      </SheetBar>

      <StatusBar>
        <StatusText>ГОТОВО</StatusText>
        <MacroIcon />
        <StatusTools>
          <ViewBtn $on><NormalView /></ViewBtn>
          <ViewBtn><LayoutView /></ViewBtn>
          <ViewBtn><BreakView /></ViewBtn>
          <Spacer $w={1} />
          <ZoomSign viewBox="0 0 12 12">
            <rect x="1" y="5" width="6" height="2" fill="#fff" />
          </ZoomSign>
          <Slider><i /></Slider>
          <ZoomSign viewBox="0 0 12 12">
            <path d="M2 5h3V2h2v3h3v2H7v3H5V7H2z" fill="#fff" />
          </ZoomSign>
          <ZoomValue>100%</ZoomValue>
        </StatusTools>
      </StatusBar>
      <Shade />
    </Window>
  );
}

export default App;
